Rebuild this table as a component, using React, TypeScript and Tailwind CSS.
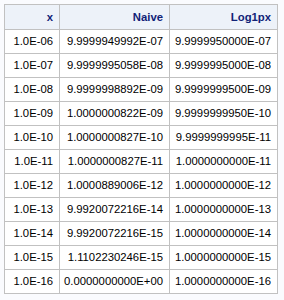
import React from 'react';

const rows = [
  ['1.0E-06', '9.9999949992E-07', '9.9999950000E-07'],
  ['1.0E-07', '9.9999995058E-08', '9.9999995000E-08'],
  ['1.0E-08', '9.9999998892E-09', '9.9999999500E-09'],
  ['1.0E-09', '1.0000000822E-09', '9.9999999950E-10'],
  ['1.0E-10', '1.0000000827E-10', '9.9999999995E-11'],
  ['1.0E-11', '1.0000000827E-11', '1.0000000000E-11'],
  ['1.0E-12', '1.0000889006E-12', '1.0000000000E-12'],
  ['1.0E-13', '9.9920072216E-14', '1.0000000000E-13'],
  ['1.0E-14', '9.9920072216E-15', '1.0000000000E-14'],
  ['1.0E-15', '1.1102230246E-15', '1.0000000000E-15'],
  ['1.0E-16', '0.0000000000E+00', '1.0000000000E-16'],
];

export default function App() {
  return (
    <div className="w-[284px] h-[300px] bg-[#fafbfe] pt-[4px] pl-[4px] font-['Liberation_Sans',Arial,sans-serif] text-[11.3px]">
      <table className="table-fixed border-collapse w-[273px] border border-[#c1c1c1]">
        <colgroup>
          <col className="w-[55px]" />
          <col className="w-[110px]" />
          <col className="w-[108px]" />
        </colgroup>
        <thead>
          <tr className="h-[25px] bg-[#edf2f9] text-[#112277]">
            <th className="border border-[#c1c1c1] text-right pr-[6px] font-bold">x</th>
            <th className="border border-[#c1c1c1] text-right pr-[6px] font-bold">Naive</th>
            <th className="border border-[#c1c1c1] text-right pr-[6px] font-bold">Log1px</th>
          </tr>
        </thead>
        <tbody>
          {rows.map((r, i) => (
            <tr key={i} className="h-[24px] bg-white text-black">
              {r.map((c, j) => (
                <td key={j} className="border border-[#c1c1c1] text-right pr-[6px] whitespace-nowrap">
                  {c}
                </td>
              ))}
            </tr>
          ))}
        </tbody>
      </table>
    </div>
  );
}
